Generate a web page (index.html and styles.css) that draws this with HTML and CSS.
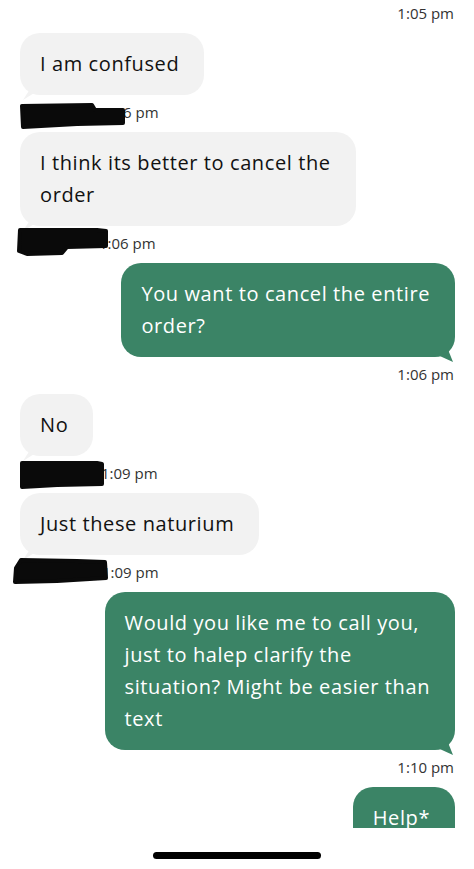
FILE: index.html
```html
<!DOCTYPE html>
<html lang="en">
<head>
    <meta charset="UTF-8">
    <meta name="viewport" content="width=device-width, initial-scale=1.0">
    <title>Chat</title>
    <link rel="stylesheet" href="styles.css">
</head>
<body>
    <div class="screen">
        <div class="chat">
            <div class="meta out first">1:05 pm</div>

            <div class="bubble in">I am confused</div>
            <div class="meta">
                <svg class="redact" width="106" height="28" viewBox="0 0 106 28"><path d="M5 8 L75 7 L78 12 L106 12 L106 25 L60 26 L6 29 Z"/></svg>
                <span>6 pm</span>
            </div>

            <div class="bubble in">I think its better to cancel the<br>order</div>
            <div class="meta">
                <svg class="redact" width="82" height="28" viewBox="0 0 82 28"><path d="M3 1 L80 1 L89 2 L89 17 L50 18 L45 24 L10 25 L2 22 Z"/></svg>
                <span>1:06 pm</span>
            </div>

            <div class="bubble out">You want to cancel the entire<br>order?</div>
            <div class="meta out">1:06 pm</div>

            <div class="bubble in">No</div>
            <div class="meta">
                <svg class="redact" width="84" height="28" viewBox="0 0 84 28"><path d="M5 4 L80 4 L85 5 L85 25 L40 26 L5 28 Z"/></svg>
                <span>1:09 pm</span>
            </div>

            <div class="bubble in">Just these naturium</div>
            <div class="meta">
                <svg class="redact" width="85" height="28" viewBox="0 0 85 28"><path d="M4 2 L60 3 L88 4 L89 20 L40 23 L-2 24 L-1 10 Z"/></svg>
                <span>1:09 pm</span>
            </div>

            <div class="bubble out">Would you like me to call you,<br>just to halep clarify the<br>situation? Might be easier than<br>text</div>
            <div class="meta out">1:10 pm</div>

            <div class="bubble out last">Help*</div>
        </div>
        <div class="home">
            <span class="home-bar"></span>
        </div>
    </div>
</body>
</html>
```
FILE: styles.css
```css
body {
    margin: 0;
    background: #fff;
    font-family: 'Open Sans', 'Noto Sans', sans-serif;
    color: #111;
}

.screen {
    width: 474px;
    height: 869px;
    display: flex;
    flex-direction: column;
}

.chat {
    height: 828px;
    overflow: hidden;
    box-sizing: border-box;
    padding: 3px 19px 0 20px;
    display: flex;
    flex-direction: column;
    align-items: flex-start;
}

.meta {
    display: flex;
    align-items: center;
    height: 20px;
    margin-top: 7px;
    font-size: 15px;
    color: #333;
}

.meta.first {
    margin-top: 0;
}

.meta.out {
    align-self: flex-end;
    margin-right: 1px;
}

.redact {
    position: relative;
    z-index: 1;
    margin: -4px 0 -4px -3px;
    overflow: visible;
    flex-shrink: 0;
}

.redact path {
    fill: #0a0a0a;
    stroke: #0a0a0a;
    stroke-width: 4;
    stroke-linejoin: round;
}

.bubble {
    position: relative;
    margin-top: 10px;
    padding: 15px 25px 15px 20px;
    box-sizing: border-box;
    border-radius: 20px;
    font-size: 20px;
    letter-spacing: 0.6px;
    line-height: 32px;
    white-space: nowrap;
}

.bubble.in {
    background: #f2f2f2;
}

.bubble.in::after {
    content: "";
    position: absolute;
    left: 3px;
    bottom: -5px;
    width: 16px;
    height: 10px;
    background: #f2f2f2;
    clip-path: polygon(40% 0, 100% 0, 0 100%);
}

.bubble.out {
    align-self: flex-end;
    background: #3b8466;
    color: #fff;
}

.bubble.out::after {
    content: "";
    position: absolute;
    right: 2px;
    bottom: -5px;
    width: 16px;
    height: 12px;
    background: #3b8466;
    clip-path: polygon(0 40%, 70% 0, 100% 100%);
}

.bubble.last {
    border-radius: 20px 20px 0 0;
}

.bubble.last::after {
    display: none;
}

.home {
    flex: 1;
    display: flex;
    justify-content: center;
    padding-top: 24px;
}

.home-bar {
    width: 168px;
    height: 7px;
    border-radius: 4px;
    background: #000;
}
```
